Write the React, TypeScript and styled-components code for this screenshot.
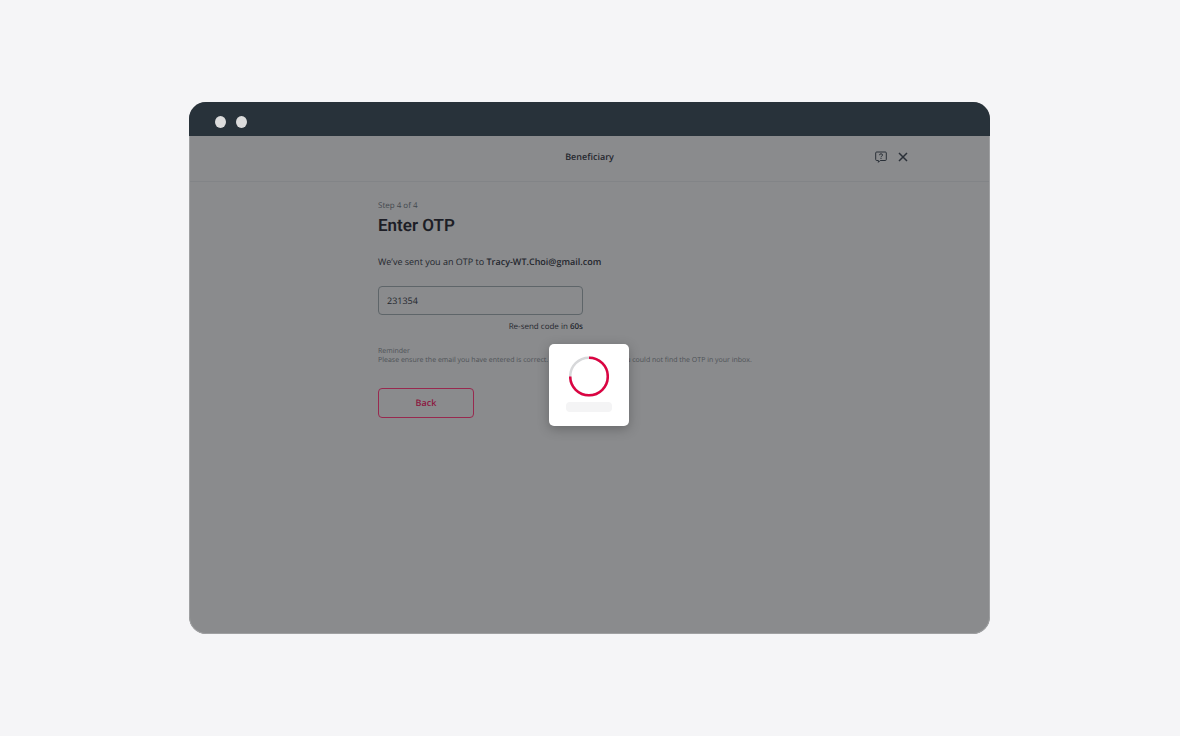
import React from "react";
import styled, { createGlobalStyle } from "styled-components";

const GlobalStyle = createGlobalStyle`
  * { box-sizing: border-box; }
  body {
    margin: 0;
    background: #f5f5f7;
    font-family: "Open Sans", "Noto Sans", sans-serif;
    color: #24272d;
    text-rendering: geometricPrecision;
  }
`;

const Page = styled.div`
  display: flex;
  min-height: 100vh;
  padding: 102px 190px 102px 189px;
`;

const BrowserWindow = styled.div`
  flex: 1;
  display: flex;
  flex-direction: column;
  min-width: 0;
  overflow: hidden;
  border-radius: 17px;
  background: #8a8b8d;
`;

const TitleBar = styled.div`
  display: flex;
  align-items: center;
  gap: 10px;
  height: 34px;
  padding: 6px 26px 0;
  background: #28323a;
`;

const WindowDot = styled.span`
  width: 11px;
  height: 12px;
  border-radius: 50%;
  background: #dcdcdc;
`;

const Screen = styled.div`
  position: relative;
  flex: 1;
  border: solid #9fa0a2;
  border-width: 0 1px 1px;
  border-radius: 0 0 17px 17px;
`;

const Header = styled.header`
  display: grid;
  grid-template-columns: 1fr auto 1fr;
  align-items: center;
  height: 46px;
  padding: 0 80px 3px;
  border-bottom: 1px solid #828487;
`;

const HeaderTitle = styled.span`
  grid-column: 2;
  font-size: 9px;
  line-height: 12px;
  font-weight: 600;
`;

const HeaderActions = styled.div`
  display: flex;
  justify-content: flex-end;
  gap: 10px;
`;

const IconButton = styled.button`
  display: flex;
  padding: 0;
  border: 0;
  background: none;
  color: #2a3038;
`;

const Content = styled.main`
  padding: 18px 188px;
`;

const Step = styled.p`
  margin: 0;
  font-size: 8px;
  line-height: 12px;
  color: #43484e;
`;

const Heading = styled.h1`
  margin: 4px 0 19px;
  font-family: Roboto, sans-serif;
  font-size: 17px;
  line-height: 20px;
  font-weight: 600;
  color: #1d1e26;
`;

const Message = styled.p`
  margin: 0 0 17px;
  font-size: 9px;
  line-height: 14px;
`;

const Strong = styled.strong`
  font-weight: 600;
`;

const Field = styled.div`
  width: 205px;
`;

const CodeInput = styled.input`
  display: block;
  width: 100%;
  height: 29px;
  padding: 0 8px;
  border: 1px solid #5e6569;
  border-radius: 4px;
  background: none;
  font: 9px/14px "Open Sans", sans-serif;
  text-rendering: inherit;
  color: #24272d;
`;

const Resend = styled.p`
  margin: 6px 0 0;
  font-size: 8px;
  line-height: 12px;
  text-align: right;
`;

const Reminder = styled.p`
  margin: 14px 0 23px;
  font-size: 7px;
  line-height: 9px;
  color: #4e5257;
`;

const BackButton = styled.button`
  width: 96px;
  height: 30px;
  padding: 0;
  border: 1px solid #98294f;
  border-radius: 4px;
  background: none;
  font: 600 9px/14px "Open Sans", sans-serif;
  text-rendering: inherit;
  color: #8c1740;
`;

const Overlay = styled.div`
  position: absolute;
  inset: 0;
  display: flex;
  align-items: center;
  justify-content: center;
  padding-right: 1px;
`;

const LoadingCard = styled.div`
  display: flex;
  flex-direction: column;
  align-items: center;
  gap: 5px;
  width: 80px;
  height: 82px;
  padding-top: 12px;
  border-radius: 5px;
  background: #fff;
  box-shadow: 0 3px 12px rgba(0, 0, 0, 0.25);
`;

const LoadingLabel = styled.span`
  width: 46px;
  height: 10px;
  border-radius: 4px;
  background: #f4f4f5;
`;

const HelpIcon = () => (
  <svg width="12" height="12" viewBox="0 0 12 12" fill="none" stroke="currentColor" aria-hidden="true">
    <path
      d="M1.700 1h8.600q1 0 1 1v6.500q0 1-1 1H5.200L3.400 11.300V9.500H1.700q-1 0-1-1V2q0-1 1-1z"
      strokeWidth="1"
      strokeLinejoin="round"
    />
    <path d="M4.500 4.200q0-1.400 1.500-1.400t1.500 1.200Q7.500 4.800 6.700 5.200 6 5.500 6 6.300M6 7v1" strokeWidth="1" />
  </svg>
);

const CloseIcon = () => (
  <svg width="12" height="12" viewBox="0 0 12 12" stroke="currentColor" strokeWidth="1.500" aria-hidden="true">
    <path d="M2 2l8 8M10 2l-8 8" />
  </svg>
);

const Spinner = () => (
  <svg width="40" height="41" viewBox="0 0 40 41" fill="none" strokeWidth="2.500" aria-hidden="true">
    <circle cx="20" cy="20.500" r="18.800" stroke="#d7d8da" />
    <path d="M20 1.700a18.800 18.800 0 1 1-18.800 18.800" stroke="#db0442" />
  </svg>
);

export default function App() {
  return (
    <>
      <GlobalStyle />
      <Page>
        <BrowserWindow>
          <TitleBar>
            <WindowDot />
            <WindowDot />
          </TitleBar>
          <Screen>
            <Header>
              <HeaderTitle>Beneficiary</HeaderTitle>
              <HeaderActions>
                <IconButton type="button" aria-label="Help">
                  <HelpIcon />
                </IconButton>
                <IconButton type="button" aria-label="Close">
                  <CloseIcon />
                </IconButton>
              </HeaderActions>
            </Header>
            <Content>
              <Step>Step 4 of 4</Step>
              <Heading>Enter OTP</Heading>
              <Message id="otp-message">
                We’ve sent you an OTP to <Strong>Tracy-WT.Choi@gmail.com</Strong>
              </Message>
              <Field>
                <CodeInput type="text" inputMode="numeric" defaultValue="231354" aria-labelledby="otp-message" />
                <Resend>
                  Re-send code in <Strong>60s</Strong>
                </Resend>
              </Field>
              <Reminder>
                Reminder
                <br />
                Please ensure the email you have entered is correct. Check spam folder if you could not find the OTP in
                your inbox.
              </Reminder>
              <BackButton type="button">Back</BackButton>
            </Content>
            <Overlay>
              <LoadingCard role="status" aria-label="Loading">
                <Spinner />
                <LoadingLabel />
              </LoadingCard>
            </Overlay>
          </Screen>
        </BrowserWindow>
      </Page>
    </>
  );
}
